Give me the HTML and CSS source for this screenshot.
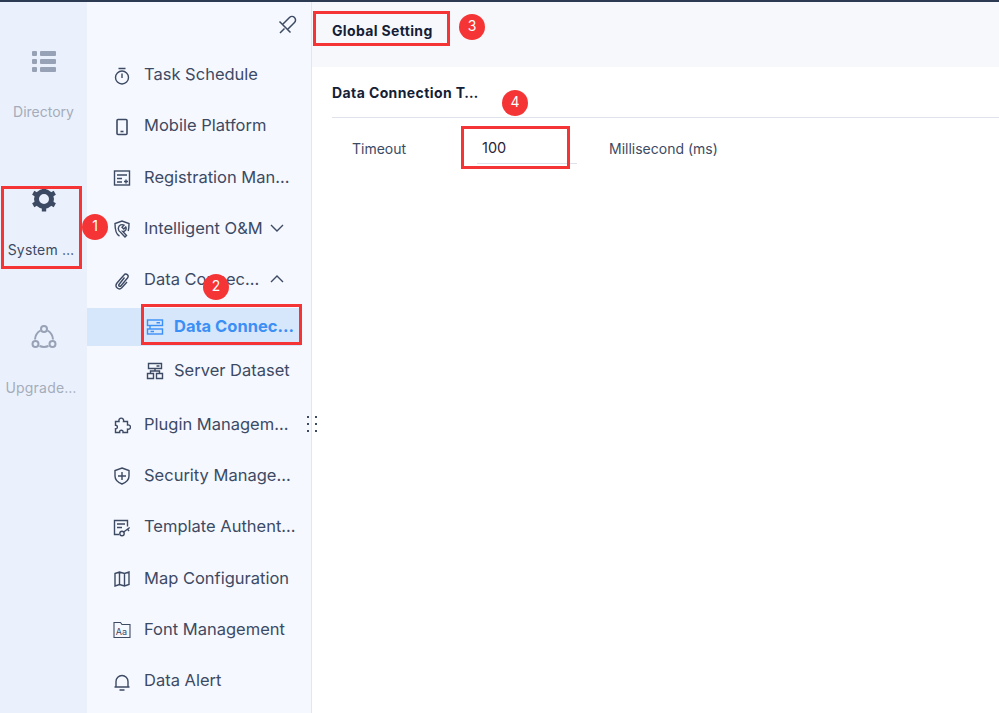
FILE: index.html
```html
<!DOCTYPE html>
<html>
<head>
    <meta charset="UTF-8">
    <title>Global Setting</title>
    <link rel="stylesheet" href="styles.css">
</head>
<body>
<div class="page">
    <aside class="rail">
        <div class="rail-item">
            <svg class="rail-icon" viewBox="0 0 26 24" fill="#98a2b6"><rect x="1" y="2" width="5" height="5" rx="1"/><rect x="9" y="2" width="16" height="5" rx="1"/><rect x="1" y="10" width="5" height="5" rx="1"/><rect x="9" y="10" width="16" height="5" rx="1"/><rect x="1" y="18" width="5" height="5" rx="1"/><rect x="9" y="18" width="16" height="5" rx="1"/></svg>
            <span>Directory</span>
        </div>
        <div class="rail-item active cut">
            <svg class="rail-icon" viewBox="0 0 26 26"><circle cx="13" cy="13" r="7.5" fill="none" stroke="#3d4a63" stroke-width="5"/><g stroke="#3d4a63" stroke-width="4.4"><path d="M13 .5v5M13 20.500v5M2.200 6.750l4.300 2.500M19.500 16.750l4.300 2.500M2.200 19.250l4.300-2.500M19.500 9.250l4.300-2.500"/></g></svg>
            <span>System …</span>
        </div>
        <div class="rail-item cut">
            <svg class="rail-icon" viewBox="0 0 26 26" fill="none" stroke="#98a2b6" stroke-width="2"><circle cx="13" cy="5" r="3"/><circle cx="4.500" cy="20" r="3"/><circle cx="21.500" cy="20" r="3"/><path d="M9.500 6.500A11 11 0 0 0 4 15.500M16.500 6.500A11 11 0 0 1 22 15.500M8.500 22c3 1.200 6 1.200 9 0"/></svg>
            <span>Upgrade…</span>
        </div>
    </aside>

    <nav class="menu">
        <svg class="pin" viewBox="0 0 20 20" fill="none" stroke="#3d4a63" stroke-width="1.500"><path d="M1.500 6.500l11 11M4.500 9.500l7-7a3.500 3.500 0 0 1 5 5l-7 7M6.500 13.500l-4.500 4.500"/></svg>
        <ul class="menu-list">
            <li class="menu-row">
                <svg viewBox="0 0 18 18" fill="none" stroke="#3d4a63" stroke-width="1.400"><circle cx="9" cy="10.500" r="6.500"/><path d="M5.500 1.500h7M9 6.500v4.500"/></svg>
                <span class="label">Task Schedule</span>
            </li>
            <li class="menu-row">
                <svg viewBox="0 0 18 18" fill="none" stroke="#3d4a63" stroke-width="1.600"><rect x="4" y="1.500" width="10" height="15" rx="1"/><path d="M7.500 13.500h3"/></svg>
                <span class="label">Mobile Platform</span>
            </li>
            <li class="menu-row">
                <svg viewBox="0 0 18 18" fill="none" stroke="#3d4a63" stroke-width="1.400"><rect x="1.500" y="2" width="15" height="14"/><path d="M4 6h10M4 9.500h5M4 13h5M11 12.500h4M13 10.500v4"/></svg>
                <span class="label">Registration Man…</span>
            </li>
            <li class="menu-row">
                <svg viewBox="0 0 18 18" fill="none" stroke="#3d4a63" stroke-width="1.400"><path d="M6.500 16C3 14.500 2 11 2 3.500L9 1l7 2.500c0 3-.2 5.500-.8 7.500"/><path d="M5.500 7.500C6 5 9 4 11 5.200L9 7.200l1.800 1.800 2-2c1 2-.5 4.800-3 4.500l3.700 4-1.500 1.500-4-4.300C6 11.500 5 9.500 5.500 7.500z"/></svg>
                <span class="label fold">Intelligent O&amp;M</span>
                <svg class="chevron" viewBox="0 0 14 14" fill="none" stroke="#3d4a63" stroke-width="1.400"><path d="M1 4l6 6 6-6"/></svg>
            </li>
            <li class="menu-group">
                <div class="menu-row">
                    <svg viewBox="0 0 18 18" fill="none" stroke="#3d4a63" stroke-width="1.400"><path d="M11.500 5.500L6 12.500c-1 1.500 1 2.500 2 1.200L14.500 6c2-2.500-1.500-5.500-3.500-3L4 11c-3 4 2 8 5 4.500L14 10"/></svg>
                    <span class="label fold">Data Connec…</span>
                    <svg class="chevron" viewBox="0 0 14 14" fill="none" stroke="#3d4a63" stroke-width="1.400"><path d="M1 10l6-6 6 6"/></svg>
                </div>
                <ul class="sub-list">
                    <li class="sub-row current">
                        <svg viewBox="0 0 18 18" fill="none" stroke="#3b8ff5" stroke-width="1.400"><rect x="1.500" y="2" width="15" height="5.500"/><rect x="1.500" y="11" width="15" height="5"/><path d="M4 7.500V11M10.500 4.700h3.500M4.500 13.500h3.500"/></svg>
                        <span class="label">Data Connec…</span>
                    </li>
                    <li class="sub-row">
                        <svg viewBox="0 0 18 18" fill="none" stroke="#3d4a63" stroke-width="1.400"><path d="M2.500 1.500h13v5h-13zM1.500 11.500h6v5h-6zM10.500 11.500h6v5h-6zM9 6.500V9M4.500 11.500V9h9v2.500M10.500 4h3"/></svg>
                        <span class="label">Server Dataset</span>
                    </li>
                </ul>
            </li>
            <li class="menu-row">
                <svg viewBox="0 0 18 18" fill="none" stroke="#3d4a63" stroke-width="1.400"><path d="M2.500 5.500H6c-1-4.500 5.500-4.500 4.500 0h4V9c4-.8 4 5 0 4.200v3.300H10c.7-3-4-3-3.300 0H2.500v-3.700c2.500.4 2.500-3.900 0-3.500z"/></svg>
                <span class="label">Plugin Managem…</span>
            </li>
            <li class="menu-row">
                <svg viewBox="0 0 18 18" fill="none" stroke="#3d4a63" stroke-width="1.400"><path d="M9 1l7 2.500V9c0 4-3 6.500-7 8-4-1.500-7-4-7-8V3.500zM5 9h8M9 5v8"/></svg>
                <span class="label">Security Manage…</span>
            </li>
            <li class="menu-row">
                <svg viewBox="0 0 18 18" fill="none" stroke="#3d4a63" stroke-width="1.400"><path d="M6 15.500H1.500v-14h13v6M4 5h8M4 8.500h5"/><circle cx="9" cy="14.500" r="2.200"/><path d="M10.700 13l6-4.500M14.500 10l1.500 2"/></svg>
                <span class="label">Template Authent…</span>
            </li>
            <li class="menu-row">
                <svg viewBox="0 0 18 18" fill="none" stroke="#3d4a63" stroke-width="1.400"><path d="M2 3.500L6.500 2l5 1.500L16 2v12.500L11.500 16l-5-1.500L2 16zM6.500 2v12.500M11.500 3.500V16"/></svg>
                <span class="label">Map Configuration</span>
            </li>
            <li class="menu-row">
                <svg viewBox="0 0 18 18" fill="none" stroke="#3d4a63" stroke-width="1.100"><path d="M1 1.500h6.500l1.500 2h8v13H1z"/><text x="2.800" y="14" class="icon-text">Aa</text></svg>
                <span class="label">Font Management</span>
            </li>
            <li class="menu-row">
                <svg viewBox="0 0 18 18" fill="none" stroke="#3d4a63" stroke-width="1.400"><path d="M3 14V8.500a6 6 0 0 1 12 0V14M1.500 14h15M6.500 17h5"/></svg>
                <span class="label">Data Alert</span>
            </li>
        </ul>
        <div class="drag-dots"><i></i><i></i><i></i><i></i><i></i><i></i></div>
    </nav>

    <main class="content">
        <header class="tabs"><span class="tab">Global Setting</span></header>
        <section class="panel">
            <h3 class="panel-title"><span>Data Connection T…</span></h3>
            <div class="field">
                <span class="field-name">Timeout</span>
                <span class="field-input">100</span>
                <span class="field-unit">Millisecond (ms)</span>
            </div>
        </section>
    </main>
</div>

<div class="mark mark-1"></div>
<div class="mark mark-2"></div>
<div class="mark mark-3"></div>
<div class="mark mark-4"></div>
<div class="badge badge-1">1</div>
<div class="badge badge-2">2</div>
<div class="badge badge-3">3</div>
<div class="badge badge-4">4</div>
</body>
</html>
```
FILE: styles.css
```css
*{ margin:0; padding:0; box-sizing:border-box; font-family:Inter,"Liberation Sans",sans-serif;}
li{ list-style-type: none;}
body{
    width: 999px;
    height: 713px;
    overflow: hidden;
    background: #fff;
    border-top: 2px solid #2c3a52;
    position: relative;
}
.page{
    display: flex;
    height: 711px;
}

/* left rail */
.rail{
    width: 87px;
    flex: none;
    background: #ebf1fc;
    padding-top: 46px;
    display: flex;
    flex-direction: column;
    gap: 66px;
}
.rail-item{
    height: 72px;
    display: flex;
    flex-direction: column;
    align-items: center;
    justify-content: space-between;
    font-size: 14px;
    color: #a4acbb;
    white-space: nowrap;
}
.rail-item.active{ color: #3d4a63;}
.rail-item.cut span{
    margin-right: 5px;
    letter-spacing: .2px;
}
.rail-icon{ width: 26px; height: 26px;}

/* menu */
.menu{
    width: 225px;
    flex: none;
    background: #f5f8ff;
    border-right: 1px solid #e3e6ef;
    position: relative;
    padding-top: 53px;
}
.pin{
    position: absolute;
    top: 13px;
    right: 13px;
    width: 20px;
    height: 20px;
}
.menu-list{
    display: flex;
    flex-direction: column;
    gap: 13.33px;
}
.menu-row,.sub-row{
    height: 38px;
    display: flex;
    align-items: center;
    color: #3d4a63;
    font-size: 16.500px;
}
.menu-row{ padding-left: 26px;}
.menu-row svg,.sub-row svg{
    width: 18px;
    height: 18px;
    flex: none;
    margin: 3px 13px 0 0;
}
.menu-row svg.chevron{
    width: 14px;
    height: 14px;
    margin: 0 0 0 6px;
}
.label{ white-space: nowrap;}
.label.fold{ width: 120px;}
.sub-list{
    display: flex;
    flex-direction: column;
    gap: 6px;
    margin: 10px 0 1px;
}
.sub-row{
    padding: 0 0 3px 59px;
}
.sub-row svg{ margin: 3px 10px 0 0;}
.sub-row.current{
    width: 214px;
    background: #d6e6fb;
    color: #3b8ff5;
    font-weight: 700;
}
.icon-text{
    font-size: 9px;
    fill: #3d4a63;
    stroke: none;
}
.drag-dots{
    position: absolute;
    top: 414px;
    left: 220px;
    display: grid;
    grid-template-columns: 2px 2px;
    gap: 5px 6px;
}
.drag-dots i{
    width: 2px;
    height: 2px;
    background: #3d4a63;
}

/* right side */
.content{
    flex: 1;
}
.tabs{
    height: 65px;
    background: #f7f8fc;
    padding: 18px 0 0 20px;
}
.tab{
    font-size: 14px;
    font-weight: 700;
    color: #141e36;
    letter-spacing: .35px;
}
.panel{
    padding: 0 0 0 20px;
}
.panel-title{
    height: 51px;
    padding-top: 17px;
    border-bottom: 1px solid #dfe2ea;
    font-size: 14px;
    font-weight: 700;
    letter-spacing: .4px;
    color: #141e36;
}
.field{
    display: flex;
    align-items: center;
    padding: 14px 0 0 20px;
    font-size: 14px;
    color: #3d4a63;
}
.field-name{ width: 125px;}
.field-input{
    width: 100px;
    height: 32px;
    padding: 7px 0 0 5px;
    border-bottom: 1px solid #dfe2ea;
    font-size: 14.500px;
    color: #2a2438;
}
.field-unit{ margin-left: 32px;}

/* annotations laid over the screenshot */
.mark{
    position: absolute;
    border: 3px solid #f53535;
}
.mark-1{ left: 1px; top: 184px; width: 81px; height: 83px;}
.mark-2{ left: 141px; top: 302px; width: 161px; height: 41px;}
.mark-3{ left: 313px; top: 9px; width: 137px; height: 35px;}
.mark-4{ left: 461px; top: 124px; width: 109px; height: 43px;}
.badge{
    position: absolute;
    width: 26px;
    height: 26px;
    border-radius: 50%;
    background: #f53535;
    color: #fff;
    font-size: 14px;
    line-height: 24px;
    text-align: center;
}
.badge-1{ left: 82px; top: 212px;}
.badge-2{ left: 203px; top: 272px;}
.badge-3{ left: 459px; top: 12px;}
.badge-4{ left: 502px; top: 88px;}
```
